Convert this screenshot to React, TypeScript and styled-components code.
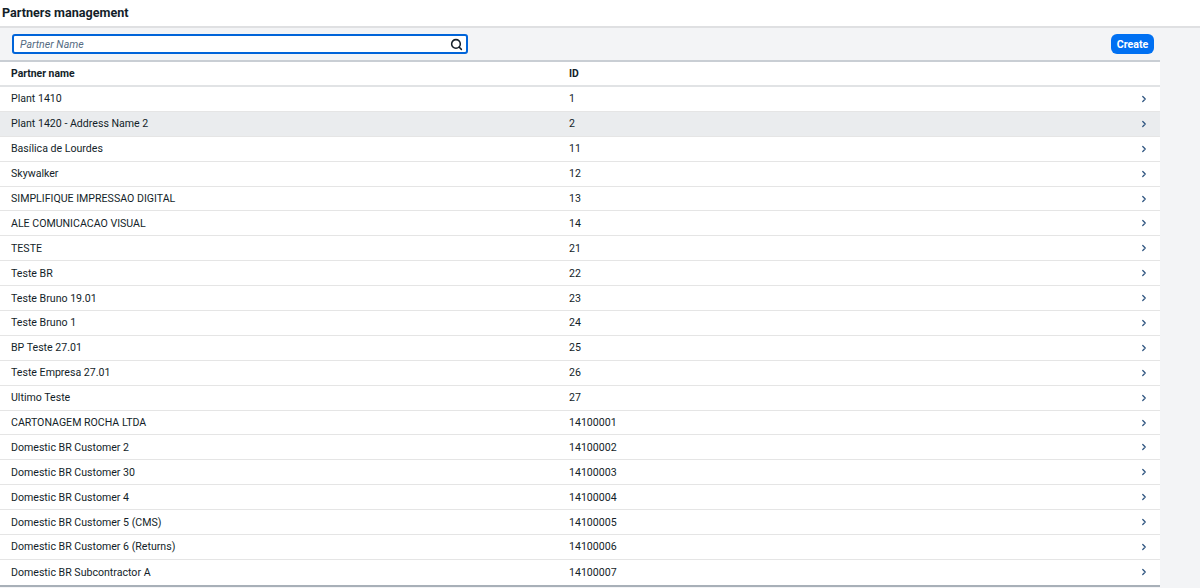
import { createGlobalStyle, styled } from "styled-components";
import { ChevronRight, Search } from "lucide-react";

const partners = [
  { name: "Plant 1410", id: "1" },
  { name: "Plant 1420 - Address Name 2", id: "2", active: true },
  { name: "Basílica de Lourdes", id: "11" },
  { name: "Skywalker", id: "12" },
  { name: "SIMPLIFIQUE IMPRESSAO DIGITAL", id: "13" },
  { name: "ALE COMUNICACAO VISUAL", id: "14" },
  { name: "TESTE", id: "21" },
  { name: "Teste BR", id: "22" },
  { name: "Teste Bruno 19.01", id: "23" },
  { name: "Teste Bruno 1", id: "24" },
  { name: "BP Teste 27.01", id: "25" },
  { name: "Teste Empresa 27.01", id: "26" },
  { name: "Ultimo Teste", id: "27" },
  { name: "CARTONAGEM ROCHA LTDA", id: "14100001" },
  { name: "Domestic BR Customer 2", id: "14100002" },
  { name: "Domestic BR Customer 30", id: "14100003" },
  { name: "Domestic BR Customer 4", id: "14100004" },
  { name: "Domestic BR Customer 5 (CMS)", id: "14100005" },
  { name: "Domestic BR Customer 6 (Returns)", id: "14100006" },
  { name: "Domestic BR Subcontractor A", id: "14100007" },
];

function App() {
  return (
    <>
      <GlobalStyle />
      <Page>
        <Header>Partners management</Header>
        <Content>
          <Toolbar>
            <SearchBox>
              <SearchInput placeholder="Partner Name" />
              <Search size={13} strokeWidth={2.8} color="#131e29" />
            </SearchBox>
            <CreateButton>Create</CreateButton>
          </Toolbar>
          <Table>
            <HeadRow>
              <HeadCell>Partner name</HeadCell>
              <HeadCell>ID</HeadCell>
            </HeadRow>
            {partners.map((p) => (
              <Row key={p.id} $active={p.active}>
                <span>{p.name}</span>
                <span>{p.id}</span>
                <Arrow>
                  <ChevronRight size={10} strokeWidth={3} color="#2f5580" />
                </Arrow>
              </Row>
            ))}
          </Table>
        </Content>
      </Page>
    </>
  );
}
export default App;

const GlobalStyle = createGlobalStyle`
  html, body {
    margin: 0;
    height: 100%;
    overflow: hidden;
    background-color: #f3f4f6;
    font-family: Roboto, "Liberation Sans", Arial, sans-serif;
    color: #131e29;
  }
`;

const Page = styled.div`
  height: 588px;
  overflow: hidden;
`;

const Header = styled.div`
  height: 28px;
  padding: 5px 0 0 2px;
  box-sizing: border-box;
  background-color: #fff;
  border-bottom: 2px solid #dfe0e2;
  font-size: 12.6px;
  font-weight: 700;
  line-height: 15px;
`;

const Content = styled.div`
  width: 1160px;
`;

const Toolbar = styled.div`
  height: 32px;
  display: flex;
  align-items: center;
  justify-content: space-between;
  padding: 0 6px 0 12px;
  box-sizing: border-box;
`;

const SearchBox = styled.div`
  width: 456px;
  height: 20px;
  padding: 0 3px 0 6px;
  box-sizing: border-box;
  display: flex;
  align-items: center;
  background-color: #fff;
  border: 2px solid #0064d9;
  border-radius: 3px;
`;

const SearchInput = styled.input`
  flex: 1;
  min-width: 0;
  border: none;
  outline: none;
  padding: 0;
  background: transparent;
  font-family: inherit;
  font-size: 10.6px;
  font-style: italic;
  &::placeholder {
    color: #556b82;
    opacity: 1;
  }
`;

const CreateButton = styled.button`
  width: 43px;
  height: 20px;
  padding: 0;
  border: none;
  border-radius: 6px;
  background-color: #0070f2;
  color: #fff;
  font-family: inherit;
  font-size: 10.6px;
  font-weight: 700;
`;

const Table = styled.div`
  background-color: #fff;
  border-top: 2px solid #c9ced4;
  border-bottom: 2px solid #a8b0b8;
`;

const columns = `
  display: grid;
  grid-template-columns: 558px 1fr 20px;
  align-items: center;
  padding-left: 11px;
  box-sizing: border-box;
`;

const HeadRow = styled.div`
  ${columns}
  height: 25px;
  padding-bottom: 1px;
  border-bottom: 2px solid #e1e3e5;
`;

const HeadCell = styled.div`
  font-size: 10.4px;
  font-weight: 700;
`;

/* the screenshot was scaled down a little, so rows land on 24.9px */
const Row = styled.div<{ $active?: boolean }>`
  ${columns}
  height: 24.9px;
  border-bottom: 1px solid #e5e5e5;
  font-size: 10.6px;
  background-color: ${({ $active }) => ($active ? "#eaecee" : "#fff")};
  &:last-child {
    border-bottom: none;
  }
`;

const Arrow = styled.span`
  display: flex;
  align-items: center;
  margin-left: -1px;
`;
